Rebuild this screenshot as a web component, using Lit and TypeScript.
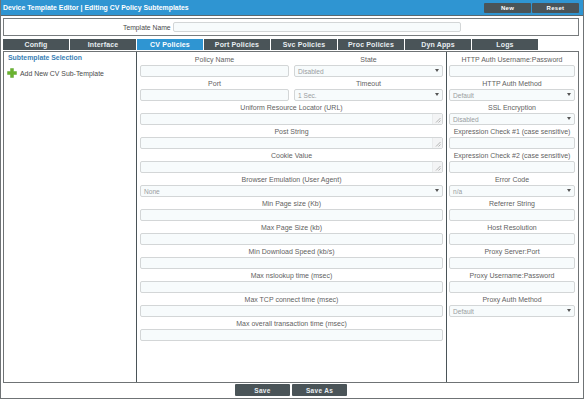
import { LitElement, html, css } from "lit";
import { customElement } from "lit/decorators.js";

type F = { l: string; k: "i" | "s" | "t"; v?: string; wide?: boolean };

const mid: F[] = [
  { l: "Policy Name", k: "i" },
  { l: "State", k: "s", v: "Disabled" },
  { l: "Port", k: "i" },
  { l: "Timeout", k: "s", v: "1 Sec." },
  { l: "Uniform Resource Locator (URL)", k: "t", wide: true },
  { l: "Post String", k: "t", wide: true },
  { l: "Cookie Value", k: "t", wide: true },
  { l: "Browser Emulation (User Agent)", k: "s", v: "None", wide: true },
  { l: "Min Page size (Kb)", k: "i", wide: true },
  { l: "Max Page Size (kb)", k: "i", wide: true },
  { l: "Min Download Speed (kb/s)", k: "i", wide: true },
  { l: "Max nslookup time (msec)", k: "i", wide: true },
  { l: "Max TCP connect time (msec)", k: "i", wide: true },
  { l: "Max overall transaction time (msec)", k: "i", wide: true },
];
const right: F[] = [
  { l: "HTTP Auth Username:Password", k: "i" },
  { l: "HTTP Auth Method", k: "s", v: "Default" },
  { l: "SSL Encryption", k: "s", v: "Disabled" },
  { l: "Expression Check #1 (case sensitive)", k: "i" },
  { l: "Expression Check #2 (case sensitive)", k: "i" },
  { l: "Error Code", k: "s", v: "n/a" },
  { l: "Referrer String", k: "i" },
  { l: "Host Resolution", k: "i" },
  { l: "Proxy Server:Port", k: "i" },
  { l: "Proxy Username:Password", k: "i" },
  { l: "Proxy Auth Method", k: "s", v: "Default" },
];
const tabs = ["Config", "Interface", "CV Policies", "Port Policies", "Svc Policies", "Proc Policies", "Dyn Apps", "Logs"];

@customElement("app-root")
export class AppRoot extends LitElement {
  static styles = css`
    :host { display: block; width: 584px; height: 400px; font-family: "Liberation Sans", Arial, sans-serif; font-size: 7px; color: #5f5f5f; background: #fff; overflow: hidden; }
    .win { box-sizing: border-box; height: 399px; border: 1px solid #6f7375; border-top: none; display: flex; flex-direction: column; }
    .title { height: 15px; flex: none; background: #2f95d2; border-bottom: 1px solid #59686f; display: flex; align-items: center; justify-content: space-between; padding: 0 4px 0 2px; color: #fff; font-weight: bold; font-size: 6.9px; }
    .title-btns { display: flex; gap: 1px; }
    .tb { width: 47px; height: 10px; background: #4a5458; color: #fff; border-radius: 1px; font-size: 6px; font-weight: bold; display: flex; align-items: center; justify-content: center; letter-spacing: .3px; }
    .content { flex: 1; display: flex; flex-direction: column; padding: 2px 4px 0 2px; min-height: 0; }
    .tname { box-sizing: border-box; height: 18px; flex: none; border: 1px solid #777b7d; display: flex; align-items: center; padding-left: 119px; gap: 2px; color: #4a4a4a; font-size: 6.8px; }
    .tname .in { width: 288px; height: 10px; }
    .tabs { display: flex; margin-top: 3px; height: 12px; flex: none; }
    .tab { width: 66px; height: 11px; margin-right: 1px; background: #4a5458; color: #e8eef2; font-weight: bold; font-size: 7px; display: flex; align-items: center; justify-content: center; letter-spacing: .15px; }
    .tab.on { background: #2f95d2; color: #fff; }
    .panes { flex: 1; min-height: 0; display: flex; border: 1px solid #6f7375; }
    .left { width: 133px; box-sizing: border-box; border-right: 1px solid #4a5458; padding: 1px 4px; flex: none; }
    .sel { color: #3a7fb5; font-weight: bold; font-size: 6.9px; line-height: 10px; }
    .add { display: flex; align-items: center; gap: 3px; margin: 5px 0 0 -1px; color: #4a4a4a; font-size: 6.9px; }
    .mid { width: 310px; box-sizing: border-box; flex: none; padding: 2px 3px 0 3px; border-right: 1px solid #4a5458; display: grid; grid-template-columns: 149px 149px; column-gap: 5px; grid-auto-rows: 24px; align-content: start; }
    .right { flex: 1; min-width: 0; box-sizing: border-box; padding: 2px 3px 0 2px; display: grid; grid-template-columns: minmax(0, 1fr); grid-auto-rows: 24px; align-content: start; }
    .f { display: flex; flex-direction: column; min-width: 0; }
    .f.wide { grid-column: 1 / -1; }
    .lab { height: 11px; line-height: 12px; text-align: center; white-space: nowrap; color: #5f5f5f; }
    .in { box-sizing: border-box; height: 12px; background: #f7fbfc; border: 1px solid #d3d6d7; border-radius: 2px; position: relative; display: flex; align-items: center; padding-left: 3px; color: #9a9d9f; font-size: 6.6px; }
    .arrow { position: absolute; right: 3px; top: 3px; width: 0; height: 0; border-left: 2px solid transparent; border-right: 2px solid transparent; border-top: 3px solid #555; }
    .grip { position: absolute; right: 0; top: 0; bottom: 0; width: 9px; border-left: 1px solid #e9ebec; background: #f3f4f5; }
    .grip svg { position: absolute; right: 1px; bottom: 1px; display: block; }
    .foot { height: 14px; flex: none; display: flex; justify-content: center; gap: 2px; padding-top: 1px; }
    .b { width: 55px; height: 12px; background: #4a5458; color: #e8eef2; font-weight: bold; font-size: 6.5px; border-radius: 1px; display: flex; align-items: center; justify-content: center; letter-spacing: .3px; }
  `;

  private field(f: F) {
    return html`<div class="f ${f.wide ? "wide" : ""}">
      <div class="lab">${f.l}</div>
      <div class="in">${f.v ?? ""}${f.k === "s" ? html`<span class="arrow"></span>` : ""}${f.k === "t"
        ? html`<span class="grip"><svg width="6" height="6" viewBox="0 0 6 6"><path d="M1 5.5L5.5 1M3.5 5.5L5.5 3.5" stroke="#999" stroke-width=".7" fill="none"/></svg></span>`
        : ""}</div>
    </div>`;
  }

  render() {
    return html`<div class="win">
      <div class="title">
        <span>Device Template Editor | Editing CV Policy Subtemplates</span>
        <div class="title-btns"><div class="tb">New</div><div class="tb">Reset</div></div>
      </div>
      <div class="content">
        <div class="tname"><span>Template Name</span><div class="in"></div></div>
        <div class="tabs">${tabs.map((t) => html`<div class="tab ${t === "CV Policies" ? "on" : ""}">${t}</div>`)}</div>
        <div class="panes">
          <div class="left">
            <div class="sel">Subtemplate Selection</div>
            <div class="add">
              <svg width="10" height="10" viewBox="0 0 10 10"><path d="M3.5 0.5h3v3h3v3h-3v3h-3v-3h-3v-3h3z" fill="#6ab32e" stroke="#4f9a22" stroke-width=".4"/></svg>
              <span>Add New CV Sub-Template</span>
            </div>
          </div>
          <div class="mid">${mid.map((f) => this.field(f))}</div>
          <div class="right">${right.map((f) => this.field(f))}</div>
        </div>
        <div class="foot"><div class="b">Save</div><div class="b">Save As</div></div>
      </div>
    </div>`;
  }
}
